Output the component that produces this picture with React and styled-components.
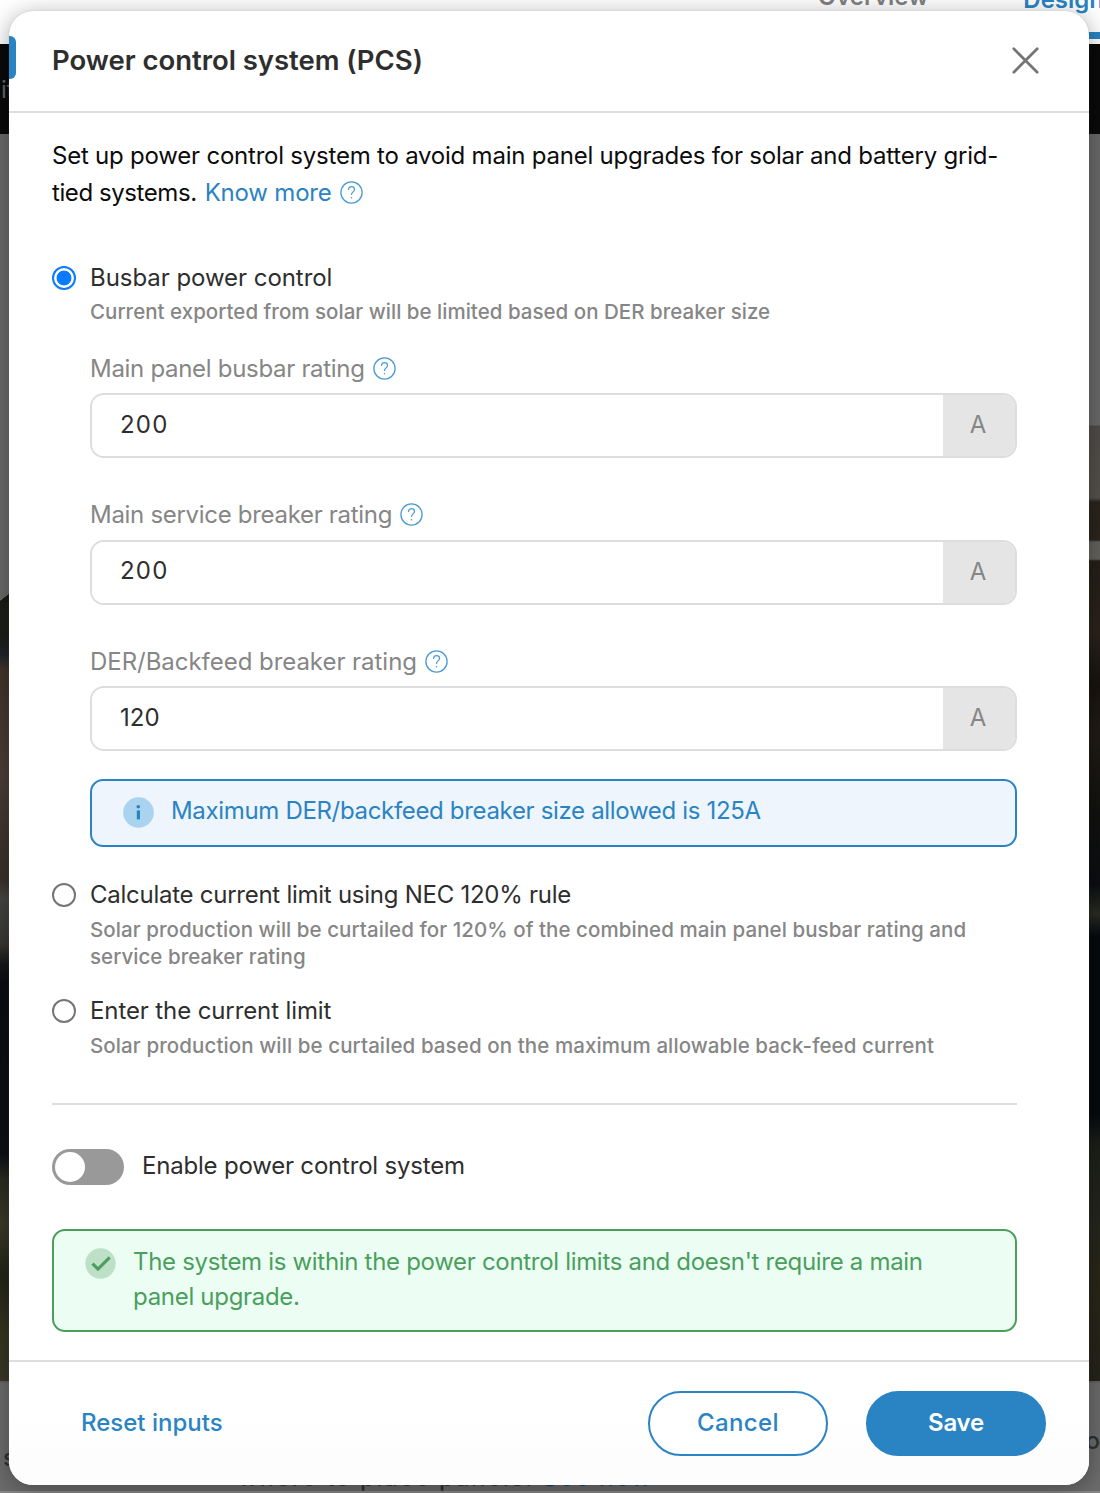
import React, { useState } from "react";
import styled, { createGlobalStyle, ThemeProvider } from "styled-components";

const theme = {
  primary: "#2a84c3",
  text: "#2e2e2e",
  gray: "#868686",
  line: "#dddddd",
  success: "#4a9f5c",
};

const GlobalStyle = createGlobalStyle`
  * {
    box-sizing: border-box;
  }
  body {
    margin: 0;
    font-family: Inter, "Liberation Sans", sans-serif;
    color: #2e2e2e;
    overflow: hidden;
  }
  button, input {
    font-family: inherit;
  }
`;

/* page behind the dialog */

const Page = styled.div`
  position: relative;
  display: flex;
  flex-direction: column;
  height: 1493px;
  overflow: hidden;
  background: #6c6c6c;
`;

const TopNav = styled.nav`
  flex: none;
  display: flex;
  justify-content: flex-end;
  height: 44px;
  background: #fff;
`;

const NavItem = styled.a`
  height: 39px;
  margin-left: 95px;
  margin-right: ${(props) => (props.$active ? "-4px" : "0")};
  margin-top: ${(props) => (props.$active ? "0" : "-1px")};
  padding-bottom: ${(props) => (props.$active ? 18 : 27)}px;
  display: flex;
  align-items: flex-end;
  font-size: 24px;
  line-height: 28px;
  font-weight: 600;
  color: ${(props) => (props.$active ? props.theme.primary : "#808080")};
  border-bottom: ${(props) =>
    props.$active ? `7px solid ${props.theme.primary}` : "none"};
`;

const DarkBar = styled.div`
  flex: none;
  height: 90px;
  padding: 31px 0 0 1px;
  background: #0a0a0a;
  color: #666;
  font-size: 24px;
  line-height: 30px;
`;

const Scene = styled.div`
  flex: none;
  display: flex;
  justify-content: space-between;
  height: 1247px;
`;

const SceneLeft = styled.div`
  width: 12px;
  background:
    linear-gradient(142deg, transparent 50%, #1a1b14 52%) 0 456px / 12px 12px no-repeat,
    linear-gradient(
      #6a6a6a 0 468px,
      #1d1e17 468px 500px,
      #1f242b 520px,
      #41342c 535px,
      #4b3f38 640px,
      #3a302a 745px,
      #454745 765px,
      #393733 810px,
      #16171a 830px,
      #0b0d13 850px,
      #0d1014 1020px,
      #2a2b20 1045px,
      #3b3b2a 1090px,
      #24251a 1140px,
      #35361f 1200px,
      #3a3728 1247px
    );
`;

const SceneRight = styled.div`
  width: 12px;
  background: linear-gradient(
    #6a6a6a 0 291px,
    #4f4c48 292px,
    #55524d 364px,
    #2a241b 368px,
    #2d251d 406px,
    #64625d 408px 425px,
    #261e17 427px,
    #2b221b 500px,
    #17130f 550px,
    #211b15 600px,
    #11120f 680px,
    #0b0e12 750px,
    #2a2c23 780px,
    #050a0e 802px 980px,
    #1c1f18 1010px,
    #24261d 1080px,
    #2a2718 1140px,
    #25241a 1247px
  );
`;

const PageFoot = styled.div`
  flex: 1;
  min-height: 0;
  border-top: 2px solid #626262;
  border-bottom: 2px solid #888;
  color: #303030;
  font-size: 24px;
  font-weight: 500;
`;

const FootRow = styled.div`
  display: flex;
  align-items: flex-end;
  justify-content: space-between;
  height: 91px;
  padding: 0 0 0 3px;
  line-height: 32px;

  span:last-child {
    margin-bottom: 17px;
  }
`;

const FootHint = styled.div`
  margin: -12px 0 0 238px;
  line-height: 32px;
  letter-spacing: 1.7px;
  span {
    color: #123f63;
  }
`;

/* dialog */

const Dialog = styled.section`
  position: absolute;
  left: 9px;
  top: 11px;
  width: 1080px;
  height: 1474px;
  display: flex;
  flex-direction: column;
  background: #fff;
  border-radius: 24px;
  box-shadow: 0 4px 24px rgba(0, 0, 0, 0.35), 0 0 1px rgba(150, 150, 150, 0.6);
`;

const SideTab = styled.div`
  position: absolute;
  left: 0;
  top: 25px;
  width: 7px;
  height: 43px;
  border-radius: 0 6px 6px 0;
  background: ${(props) => props.theme.primary};
`;

const Header = styled.header`
  display: flex;
  align-items: center;
  justify-content: space-between;
  height: 102px;
  padding: 0 50px 2px 43px;
  border-bottom: 2px solid ${(props) => props.theme.line};
`;

const Heading = styled.h1`
  margin: 0;
  font-size: 27.5px;
  line-height: 34px;
  font-weight: 600;
  letter-spacing: -0.03px;
`;

const CloseButton = styled.button`
  display: flex;
  padding: 0;
  margin-top: 1px;
  border: 0;
  background: none;
`;

const Body = styled.div`
  flex: 1;
  padding: 24px 72px 0 43px;
`;

const Intro = styled.p`
  margin: 0 -10px 51px 0;
  color: #0c0c0c;
  font-size: 24px;
  line-height: 37px;
`;

const Line = styled.span`
  display: flex;
  align-items: center;
  white-space: nowrap;
  letter-spacing: ${(props) => props.$track || 0}px;
`;

const Link = styled.a`
  margin: 0 8px 0 8px;
  color: ${(props) => props.theme.primary};
  letter-spacing: -0.2px;
`;

const Option = styled.div`
  display: grid;
  grid-template-columns: 24px 1fr;
  column-gap: 14px;
  margin-bottom: ${(props) => props.$gap || 0}px;
`;

const Radio = styled.input`
  appearance: none;
  width: 24px;
  height: 24px;
  margin: 4px 0 0;
  border: 2px solid #757575;
  border-radius: 50%;
  background: #fff;

  &:checked {
    border-color: #0a7aff;
    background: radial-gradient(circle, #0a7aff 7px, #fff 7.8px);
  }
`;

const OptionTitle = styled.label`
  display: block;
  font-size: 24px;
  line-height: 32px;
  white-space: nowrap;
  letter-spacing: ${(props) => props.$track || 0}px;
`;

const OptionNote = styled.p`
  margin: ${(props) => props.$top || 5}px 0 0;
  color: ${(props) => props.theme.gray};
  font-size: 20.5px;
  font-weight: 500;
  line-height: 27px;
  white-space: nowrap;
`;

const Fields = styled.div`
  display: flex;
  flex-direction: column;
  row-gap: 40.5px;
  margin: 27px 0 28px;
`;

const FieldLabel = styled.label`
  display: flex;
  align-items: center;
  column-gap: 8px;
  height: 32px;
  margin-bottom: 9px;
  color: ${(props) => props.theme.gray};
  font-size: 24px;
  white-space: nowrap;
  letter-spacing: ${(props) => props.$track || 0}px;
`;

const InputGroup = styled.div`
  display: flex;
  height: 65px;
  border: 2px solid ${(props) => props.theme.line};
  border-radius: 14px;
  overflow: hidden;
`;

const Input = styled.input`
  flex: 1;
  min-width: 0;
  padding: 0 28px 3px;
  border: 0;
  outline: none;
  color: ${(props) => props.theme.text};
  font-size: 24px;
  letter-spacing: ${(props) => props.$track || 0}px;
`;

const Unit = styled.span`
  display: flex;
  align-items: center;
  justify-content: center;
  width: 72px;
  padding: 0 2px 2px 0;
  background: #e5e5e5;
  color: ${(props) => props.theme.gray};
  font-size: 24px;
`;

const Notice = styled.div`
  display: flex;
  align-items: flex-start;
  border-radius: 13px;
  font-size: 24px;
  white-space: nowrap;

  svg {
    flex: none;
  }
`;

const InfoNotice = styled(Notice)`
  height: 68px;
  padding: 14px 31px;
  column-gap: 17px;
  border: 2px solid ${(props) => props.theme.primary};
  background: #eef5fc;
  color: ${(props) => props.theme.primary};
  line-height: 32px;

  svg {
    margin-top: 2px;
  }
`;

const SuccessNotice = styled(Notice)`
  height: 103px;
  padding: 13px 31px;
  column-gap: 17px;
  border: 2px solid ${(props) => props.theme.success};
  background: #ecfef4;
  color: ${(props) => props.theme.success};
  line-height: 35px;

  svg {
    margin-top: 4px;
  }
`;

const Divider = styled.hr`
  height: 2px;
  margin: 44px 0;
  border: 0;
  background: ${(props) => props.theme.line};
`;

const ToggleRow = styled.div`
  display: flex;
  align-items: center;
  column-gap: 18px;
  height: 36px;
  margin-bottom: 44px;

  > span {
    padding-bottom: 2px;
  }
`;

const Toggle = styled.button`
  display: flex;
  align-items: center;
  justify-content: ${(props) => (props.$on ? "flex-end" : "flex-start")};
  width: 72px;
  height: 36px;
  padding: 0 3px;
  border: 0;
  border-radius: 18px;
  background: ${(props) => (props.$on ? props.theme.primary : "#999")};

  &::before {
    content: "";
    width: 30px;
    height: 30px;
    border-radius: 50%;
    background: #fff;
  }
`;

const Footer = styled.footer`
  display: flex;
  align-items: center;
  height: 125px;
  padding: 0 43px 0 72px;
  border-top: 2px solid ${(props) => props.theme.line};
  border-radius: 0 0 24px 24px;
  background: linear-gradient(#fff 40%, #fcfcfc);
`;

const TextButton = styled.button`
  margin-right: auto;
  padding: 0 0 2px;
  border: 0;
  background: none;
  color: ${(props) => props.theme.primary};
  font-size: 24px;
  font-weight: 500;
`;

const PillButton = styled.button`
  width: 180px;
  height: 65px;
  margin-left: ${(props) => (props.$filled ? 38 : 0)}px;
  padding: 0 0 3px;
  border: 2px solid ${(props) => props.theme.primary};
  border-radius: 33px;
  background: ${(props) => (props.$filled ? props.theme.primary : "#fff")};
  color: ${(props) => (props.$filled ? "#fff" : props.theme.primary)};
  font-size: 24px;
  font-weight: ${(props) => (props.$filled ? 600 : 500)};
  letter-spacing: ${(props) => (props.$filled ? -0.2 : 0.4)}px;
`;

const HelpIcon = () => (
  <svg width="23" height="23" viewBox="0 0 23 23" fill="none" stroke="#4a9ad3">
    <circle cx="11.5" cy="11.5" r="10.6" strokeWidth="1.3" />
    <path
      d="M8.5 8.5c.2-1.8 1.4-2.8 3-2.8s3 1 3 2.7c0 2.4-3 2.5-3 5.1"
      strokeWidth="1.2"
      strokeLinecap="round"
    />
    <circle cx="11.5" cy="16.8" r="0.8" fill="#4a9ad3" stroke="none" />
  </svg>
);

const InfoIcon = () => (
  <svg width="31" height="31" viewBox="0 0 31 31">
    <circle cx="15.5" cy="15.5" r="15.3" fill="#a9d3ef" />
    <circle cx="15.3" cy="9.7" r="1.8" fill="#2a84c3" />
    <path d="M13.8 13.4h3.2v9h-3.2z" fill="#2a84c3" />
  </svg>
);

const CheckIcon = () => (
  <svg width="31" height="31" viewBox="0 0 31 31" fill="none">
    <circle cx="15.5" cy="15.5" r="15.2" fill="#bde0c6" />
    <path d="M7.5 15.6l5.5 5.5L24.7 9.4" stroke="#4a9f5c" strokeWidth="3" />
  </svg>
);

const CloseIcon = () => (
  <svg width="27" height="27" viewBox="0 0 27 27" stroke="#757575">
    <path d="M1.8 1.8l23.4 23.4M25.2 1.8L1.8 25.2" strokeWidth="2.7" strokeLinecap="round" />
  </svg>
);

const fields = [
  { id: "busbar", label: "Main panel busbar rating", value: "200", track: -0.3, valueTrack: 1.2 },
  { id: "service", label: "Main service breaker rating", value: "200", track: -0.3, valueTrack: 1.2 },
  { id: "backfeed", label: "DER/Backfeed breaker rating", value: "120", track: -0.04, valueTrack: 0 },
];

const Field = ({ id, label, value, track, valueTrack }) => (
  <div>
    <FieldLabel htmlFor={id} $track={track}>
      {label}
      <HelpIcon />
    </FieldLabel>
    <InputGroup>
      <Input id={id} type="text" defaultValue={value} $track={valueTrack} />
      <Unit>A</Unit>
    </InputGroup>
  </div>
);

const App = () => {
  const [mode, setMode] = useState("busbar-control");
  const [enabled, setEnabled] = useState(false);

  const radioProps = (value) => ({
    type: "radio",
    name: "mode",
    id: value,
    checked: mode === value,
    onChange: () => setMode(value),
  });

  return (
    <ThemeProvider theme={theme}>
      <GlobalStyle />
      <Page>
        <TopNav>
          <NavItem>Overview</NavItem>
          <NavItem $active>Design</NavItem>
        </TopNav>
        <DarkBar>it</DarkBar>
        <Scene>
          <SceneLeft />
          <SceneRight />
        </Scene>
        <PageFoot>
          <FootRow>
            <span>s</span>
            <span>o</span>
          </FootRow>
          <FootHint>
            where to place panels. <span>See how</span>
          </FootHint>
        </PageFoot>

        <Dialog>
          <SideTab />
          <Header>
            <Heading>Power control system (PCS)</Heading>
            <CloseButton aria-label="Close">
              <CloseIcon />
            </CloseButton>
          </Header>
          <Body>
            <Intro>
              <Line $track={-0.22}>
                Set up power control system to avoid main panel upgrades for solar and battery grid-
              </Line>
              <Line $track={-0.42}>
                tied systems. <Link>Know more</Link>
                <HelpIcon />
              </Line>
            </Intro>

            <Option $gap={32}>
              <Radio {...radioProps("busbar-control")} />
              <div>
                <OptionTitle htmlFor="busbar-control" $track={-0.05}>
                  Busbar power control
                </OptionTitle>
                <OptionNote $top={4}>
                  <Line $track={0.02}>
                    Current exported from solar will be limited based on DER breaker size
                  </Line>
                </OptionNote>
                <Fields>
                  {fields.map((field) => (
                    <Field key={field.id} {...field} />
                  ))}
                </Fields>
                <InfoNotice>
                  <InfoIcon />
                  <Line $track={-0.33}>Maximum DER/backfeed breaker size allowed is 125A</Line>
                </InfoNotice>
              </div>
            </Option>

            <Option $gap={25}>
              <Radio {...radioProps("nec")} />
              <div>
                <OptionTitle htmlFor="nec" $track={-0.26}>
                  Calculate current limit using NEC 120% rule
                </OptionTitle>
                <OptionNote>
                  <Line $track={0.06}>
                    Solar production will be curtailed for 120% of the combined main panel busbar rating and
                  </Line>
                  <Line $track={0.04}>service breaker rating</Line>
                </OptionNote>
              </div>
            </Option>

            <Option>
              <Radio {...radioProps("manual")} />
              <div>
                <OptionTitle htmlFor="manual" $track={-0.11}>
                  Enter the current limit
                </OptionTitle>
                <OptionNote>
                  <Line $track={0.1}>
                    Solar production will be curtailed based on the maximum allowable back-feed current
                  </Line>
                </OptionNote>
              </div>
            </Option>

            <Divider />

            <ToggleRow>
              <Toggle
                role="switch"
                aria-checked={enabled}
                aria-label="Enable power control system"
                $on={enabled}
                onClick={() => setEnabled(!enabled)}
              />
              <OptionTitle as="span" $track={-0.2}>
                Enable power control system
              </OptionTitle>
            </ToggleRow>

            <SuccessNotice>
              <CheckIcon />
              <div>
                <Line $track={-0.31}>
                  The system is within the power control limits and doesn't require a main
                </Line>
                <Line $track={-0.3}>panel upgrade.</Line>
              </div>
            </SuccessNotice>
          </Body>
          <Footer>
            <TextButton>Reset inputs</TextButton>
            <PillButton>Cancel</PillButton>
            <PillButton $filled>Save</PillButton>
          </Footer>
        </Dialog>
      </Page>
    </ThemeProvider>
  );
};

export default App;
